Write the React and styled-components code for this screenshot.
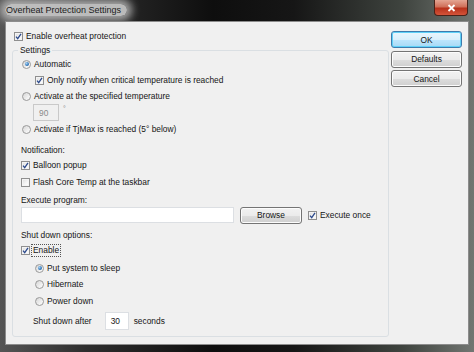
import React from 'react';
import styled, { createGlobalStyle } from 'styled-components';

const GlobalStyle = createGlobalStyle`
  html, body {
    margin: 0;
    padding: 0;
    background: #2b2b2b;
  }
  body {
    font-family: "Liberation Sans", Arial, sans-serif;
  }
`;

const Window = styled.div`
  width: 474px;
  height: 352px;
  box-sizing: border-box;
  display: flex;
  flex-direction: column;
  padding: 0 5px 7px 5px;
  background: linear-gradient(90deg, #555 0%, #2e2e2e 18%, #0e0e0e 45%, #161616 62%, #3f443f 85%, #727672 100%);
`;

const TitleBar = styled.div`
  height: 21px;
  flex: none;
  display: flex;
  justify-content: space-between;
  align-items: flex-start;
`;

const TitleText = styled.span`
  margin-top: 4px;
  padding: 0 6px 0 1px;
  font-size: 9px;
  line-height: 12px;
  color: #1c1c1c;
  background: rgba(200, 200, 200, 0.92);
  border-radius: 8px;
  box-shadow: 0 0 8px 5px rgba(200, 200, 200, 0.8);
`;

const CloseButton = styled.div`
  width: 34px;
  height: 16px;
  margin-right: 1px;
  display: flex;
  align-items: center;
  justify-content: center;
  box-sizing: border-box;
  border: 1px solid #4a2219;
  border-top: none;
  border-radius: 0 0 4px 4px;
  background: linear-gradient(180deg, #e4a593 0%, #d0705a 45%, #b8321c 55%, #d4543a 100%);
`;

const Client = styled.div`
  flex: 1;
  display: flex;
  background: #f0f0f0;
  border: 1px solid #8c8c8c;
  font-size: 8.4px;
  color: #151515;
`;

const Main = styled.div`
  width: 377px;
  flex: none;
  margin-left: 6px;
  padding-top: 6px;
`;

const Side = styled.div`
  margin-left: 2px;
  padding-top: 9px;
  display: flex;
  flex-direction: column;
  gap: 2.5px;
`;

const Row = styled.div`
  display: flex;
  align-items: center;
  height: ${(p) => p.$h || 16}px;
  margin-top: ${(p) => p.$mt || 0}px;
  margin-left: ${(p) => p.$indent || 0}px;
  gap: ${(p) => p.$gap ?? 3}px;
  white-space: nowrap;
`;

const GroupBox = styled.fieldset`
  margin: 1px 0 0 0;
  padding: 0 0 6px 8px;
  border: 1px solid #dadfe3;
  border-radius: 3px;
  min-inline-size: auto;
`;

const Caption = styled.legend`
  margin-left: -3px;
  padding: 0 2px;
  line-height: 10px;
  font-size: 8.4px;
`;

const Box = styled.span`
  width: 9px;
  height: 9px;
  box-sizing: border-box;
  flex: none;
  display: flex;
  align-items: center;
  justify-content: center;
  border: 1px solid #8f8f8f;
  background: linear-gradient(135deg, #dcdcdc 0%, #f6f6f6 60%, #ffffff 100%);
  box-shadow: inset 0 0 0 1px #f4f4f4;
`;

const Round = styled.span`
  width: 9px;
  height: 9px;
  box-sizing: border-box;
  flex: none;
  border-radius: 50%;
  border: 1px solid #9a9a9a;
  display: flex;
  align-items: center;
  justify-content: center;
  background: linear-gradient(135deg, #d6d6d6 0%, #f3f3f3 70%, #fff 100%);
`;

const Dot = styled.span`
  width: 4px;
  height: 4px;
  border-radius: 50%;
  background: radial-gradient(circle at 35% 35%, #a9d4f5 0%, #3a7fc0 55%, #1b4f84 100%);
`;

const FocusLabel = styled.span`
  padding: 0 1px;
  outline: 1px dotted #555;
  line-height: 11px;
`;

const Field = styled.div`
  width: ${(p) => p.$w}px;
  height: ${(p) => p.$h || 16}px;
  box-sizing: border-box;
  flex: none;
  display: flex;
  align-items: center;
  padding-left: 5px;
  background: ${(p) => (p.$disabled ? '#f0f0f0' : '#fff')};
  border: 1px solid ${(p) => (p.$disabled ? '#c9c9c9' : '#dcdfe3')};
  color: ${(p) => (p.$disabled ? '#8a8a8a' : '#151515')};
`;

const Degree = styled.span`
  align-self: flex-start;
  margin-top: 1px;
  margin-left: 1px;
  color: #8a8a8a;
  font-size: 7px;
`;

const Button = styled.div`
  width: ${(p) => p.$w || 71}px;
  height: 17px;
  box-sizing: border-box;
  flex: none;
  display: flex;
  align-items: center;
  justify-content: center;
  border: 1px solid ${(p) => (p.$default ? '#3d7bad' : '#747474')};
  border-radius: 3px;
  background: ${(p) =>
    p.$default
      ? 'linear-gradient(180deg, #eaf6fd 0%, #d9f0fc 50%, #bee6fd 51%, #a7d9f5 100%)'
      : 'linear-gradient(180deg, #f2f2f2 0%, #ebebeb 50%, #dddddd 51%, #cfcfcf 100%)'};
  box-shadow: inset 0 0 0 1px ${(p) => (p.$default ? '#5fd1f8' : '#fcfcfc')};
  color: #151515;
`;

const Spacer = styled.span`
  width: ${(p) => p.$w}px;
  flex: none;
`;

function Check({ checked }) {
  return (
    <Box>
      {checked && (
        <svg width="7" height="7" viewBox="0 0 7 7">
          <path d="M1 3.6 L2.7 5.6 L6 0.8" fill="none" stroke="#2c4a8c" strokeWidth="1.3" />
        </svg>
      )}
    </Box>
  );
}

function Radio({ checked }) {
  return <Round>{checked && <Dot />}</Round>;
}

export default function App() {
  return (
    <>
      <GlobalStyle />
      <Window>
        <TitleBar>
          <TitleText>Overheat Protection Settings</TitleText>
          <CloseButton>
            <svg width="9" height="8" viewBox="0 0 9 8">
              <path d="M1.5 1 L7.5 7 M7.5 1 L1.5 7" stroke="#fff" strokeWidth="1.8" />
            </svg>
          </CloseButton>
        </TitleBar>
        <Client>
          <Main>
            <Row $indent={2}>
              <Check checked />
              <span>Enable overheat protection</span>
            </Row>
            <GroupBox>
              <Caption>Settings</Caption>
              <Row $indent={1} $mt={1}>
                <Radio checked />
                <span>Automatic</span>
              </Row>
              <Row $indent={14}>
                <Check checked />
                <span>Only notify when critical temperature is reached</span>
              </Row>
              <Row $indent={1}>
                <Radio />
                <span>Activate at the specified temperature</span>
              </Row>
              <Row $indent={12} $h={17} $gap={0}>
                <Field $w={26} $h={17} $disabled>90</Field>
                <Spacer $w={3} />
                <Degree>°</Degree>
              </Row>
              <Row $indent={1}>
                <Radio />
                <span>Activate if TjMax is reached (5° below)</span>
              </Row>
              <Row $mt={6} $h={14}>Notification:</Row>
              <Row>
                <Check checked />
                <span>Balloon popup</span>
              </Row>
              <Row $mt={1}>
                <Check />
                <span>Flash Core Temp at the taskbar</span>
              </Row>
              <Row $mt={3} $h={14}>Execute program:</Row>
              <Row $gap={6}>
                <Field $w={213} />
                <Button $w={62}>Browse</Button>
                <Row $gap={3}>
                  <Check checked />
                  <span>Execute once</span>
                </Row>
              </Row>
              <Row $mt={5} $h={14}>Shut down options:</Row>
              <Row $gap={2}>
                <Check checked />
                <FocusLabel>Enable</FocusLabel>
              </Row>
              <Row $mt={2} $indent={14}>
                <Radio checked />
                <span>Put system to sleep</span>
              </Row>
              <Row $indent={14}>
                <Radio />
                <span>Hibernate</span>
              </Row>
              <Row $mt={1} $indent={14}>
                <Radio />
                <span>Power down</span>
              </Row>
              <Row $mt={3} $h={18} $indent={12} $gap={0}>
                <span>Shut down after</span>
                <Spacer $w={13} />
                <Field $w={24} $h={18}>30</Field>
                <Spacer $w={5} />
                <span>seconds</span>
              </Row>
            </GroupBox>
          </Main>
          <Side>
            <Button $default>OK</Button>
            <Button>Defaults</Button>
            <Button>Cancel</Button>
          </Side>
        </Client>
      </Window>
    </>
  );
}
